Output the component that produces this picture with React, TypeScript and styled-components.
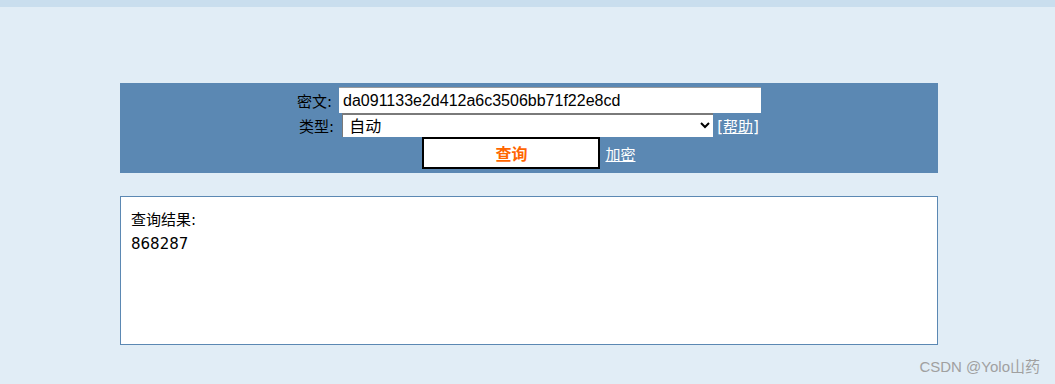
import React from 'react'
import styled, { createGlobalStyle } from 'styled-components'

const GlobalStyle = createGlobalStyle`
  html, body {
    margin: 0;
    padding: 0;
    background: #e1edf6;
    font-family: "DejaVu Sans", "Noto Sans CJK SC", sans-serif;
    font-size: 15px;
  }
`

const Page = styled.div`
  position: relative;
  width: 1055px;
  height: 384px;
  border-top: 7px solid #c9deee;
  box-sizing: border-box;
  padding-top: 76px;
`

const QueryPanel = styled.form`
  width: 818px;
  margin-left: 120px;
  background: #5b88b3;
  padding: 4px 0;
  display: flex;
  flex-direction: column;
  align-items: center;
`

const Row = styled.div<{ $h: number }>`
  display: flex;
  align-items: center;
  justify-content: center;
  height: ${({ $h }) => $h}px;
`

const Label = styled.span<{ $gap: number }>`
  color: #000;
  font-size: 15px;
  margin-right: ${({ $gap }) => $gap}px;
`

const CipherInput = styled.input`
  width: 422px;
  height: 26px;
  box-sizing: border-box;
  border: none;
  border-top: 1px solid #9a9a9a;
  padding: 0 4px;
  font-family: "Liberation Sans", sans-serif;
  font-size: 16px;
  color: #000;
  background: #fff;
  outline: none;
`

const TypeSelect = styled.select`
  width: 371px;
  height: 24px;
  box-sizing: border-box;
  border: none;
  border-top: 2px solid #7a7a7a;
  border-left: 1px solid #7a7a7a;
  font-family: "Liberation Sans", "Noto Sans CJK SC", sans-serif;
  font-size: 16px;
  background: #fff;
  color: #000;
  padding: 0 2px;
`

const HelpLink = styled.a`
  color: #fff;
  font-size: 15px;
  margin-left: 4px;
  text-decoration: none;
  & > u {
    text-decoration: underline;
  }
`

const SubmitButton = styled.button`
  width: 178px;
  height: 32px;
  box-sizing: border-box;
  border: 2px solid #000;
  background: #fff;
  color: #ff6600;
  font-family: "Noto Sans CJK SC", sans-serif;
  font-weight: bold;
  font-size: 16px;
  cursor: pointer;
  padding: 0;
`

const EncryptLink = styled.a`
  color: #fff;
  font-size: 15px;
  text-decoration: underline;
  margin-left: 5px;
`

const ResultBox = styled.div`
  width: 818px;
  height: 149px;
  box-sizing: border-box;
  margin: 23px 0 0 120px;
  background: #fff;
  border: 1px solid #5b88b3;
  padding: 11px 10px;
  font-size: 15px;
  color: #000;
  line-height: 24px;
`

const Watermark = styled.div`
  position: absolute;
  right: 15px;
  bottom: 8px;
  color: #a0a0a0;
  font-family: "Liberation Sans", "Noto Sans CJK SC", sans-serif;
  font-size: 15px;
`

export default function App() {
  const [cipher, setCipher] = React.useState('da091133e2d412a6c3506bb71f22e8cd')
  return (
    <Page>
      <GlobalStyle />
      <QueryPanel onSubmit={(e) => e.preventDefault()}>
        <Row $h={26}>
          <Label $gap={7}>密文:</Label>
          <CipherInput value={cipher} onChange={(e) => setCipher(e.target.value)} />
        </Row>
        <Row $h={24}>
          <Label $gap={8}>类型:</Label>
          <TypeSelect defaultValue="auto">
            <option value="auto">自动</option>
          </TypeSelect>
          <HelpLink href="#">
            [<u>帮助</u>]
          </HelpLink>
        </Row>
        <Row $h={32}>
          <SubmitButton type="submit">查询</SubmitButton>
          <EncryptLink href="#">加密</EncryptLink>
        </Row>
      </QueryPanel>
      <ResultBox>
        <div>查询结果:</div>
        <div>868287</div>
      </ResultBox>
      <Watermark>CSDN @Yolo山药</Watermark>
    </Page>
  )
}
